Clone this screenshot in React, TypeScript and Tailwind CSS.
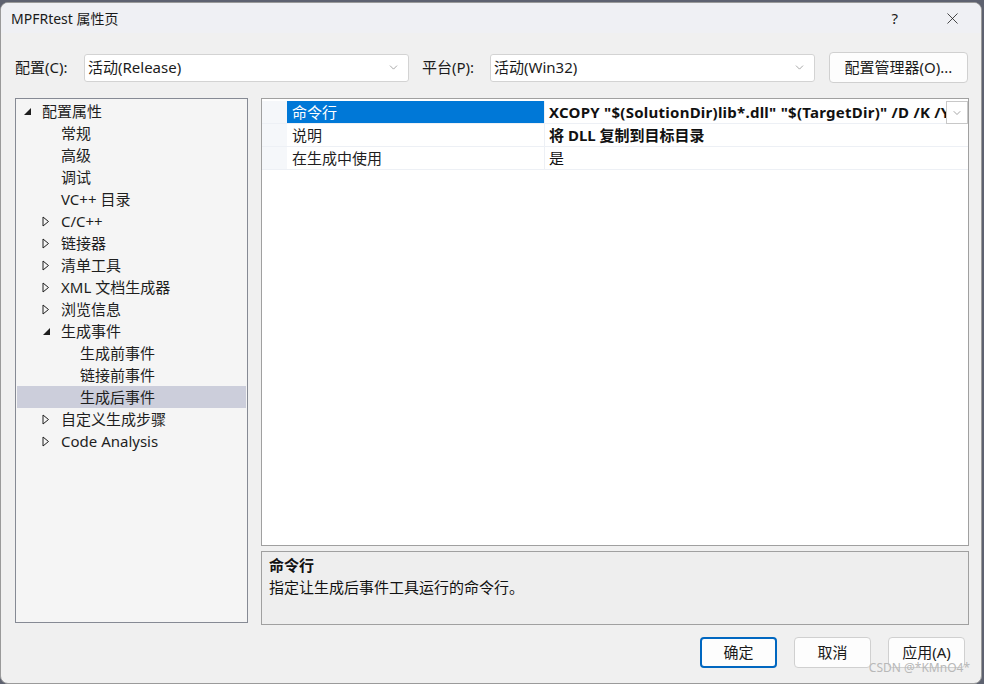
import { ChevronDown, X } from "lucide-react";

const font = { fontFamily: '"Noto Sans", "Noto Sans CJK SC", sans-serif' };

type TreeItem = { label: string; level: number; arrow?: "open" | "closed"; selected?: boolean };

const tree: TreeItem[] = [
	{ label: "配置属性", level: 0, arrow: "open" },
	{ label: "常规", level: 1 },
	{ label: "高级", level: 1 },
	{ label: "调试", level: 1 },
	{ label: "VC++ 目录", level: 1 },
	{ label: "C/C++", level: 1, arrow: "closed" },
	{ label: "链接器", level: 1, arrow: "closed" },
	{ label: "清单工具", level: 1, arrow: "closed" },
	{ label: "XML 文档生成器", level: 1, arrow: "closed" },
	{ label: "浏览信息", level: 1, arrow: "closed" },
	{ label: "生成事件", level: 1, arrow: "open" },
	{ label: "生成前事件", level: 2 },
	{ label: "链接前事件", level: 2 },
	{ label: "生成后事件", level: 2, selected: true },
	{ label: "自定义生成步骤", level: 1, arrow: "closed" },
	{ label: "Code Analysis", level: 1, arrow: "closed" },
];

const Arrow = ({ kind }: { kind?: "open" | "closed" }) => {
	if (!kind) return <span className="w-[19px] shrink-0" />;
	return (
		<span className="w-[19px] shrink-0 flex items-center">
			{kind === "open" ? (
				<svg width="9" height="9" viewBox="0 0 9 9">
					<path d="M8 1 L8 8 L1 8 Z" fill="#1e1e1e" />
				</svg>
			) : (
				<svg width="8" height="11" viewBox="0 0 8 11">
					<path d="M1 1 L6.5 5.5 L1 10 Z" fill="none" stroke="#1e1e1e" strokeWidth="1" />
				</svg>
			)}
		</span>
	);
};

const Combo = ({ value, className }: { value: string; className: string }) => (
	<div className={`h-[28px] bg-white border border-[#d3d3d3] rounded-[3px] flex items-center justify-between pl-[3px] pr-[8px] text-[15px] text-[#1b1b1b] ${className}`}>
		<span>{value}</span>
		<ChevronDown className="size-[13px] text-[#7a7a7a]" strokeWidth={1.2} />
	</div>
);

const Btn = ({ label, primary }: { label: string; primary?: boolean }) => (
	<button
		className={`w-[77px] h-[31px] rounded-[4px] bg-[#fdfdfd] text-[15px] text-[#1b1b1b] flex items-center justify-center ${
			primary ? "border-2 border-[#0067c0]" : "border border-[#d0d0d0]"
		}`}
	>
		{label}
	</button>
);

export default function App() {
	return (
		<div className="w-[984px] h-[684px] bg-[#5e6270] pt-[2px] overflow-hidden" style={font}>
			<div className="w-[982px] h-[682px] bg-[#f0f0f0] rounded-[8px] border border-[#9a9a9a] flex flex-col overflow-hidden">
				{/* title bar */}
				<div className="h-[30px] bg-[#eff0f4] flex items-center pl-[10px] shrink-0">
					<span className="text-[14px] text-[#1a1a1a]">MPFRtest 属性页</span>
					<span className="ml-auto mr-[45px] text-[15px] text-[#1a1a1a]">?</span>
					<X className="size-[19px] mr-[19px] text-[#1a1a1a]" strokeWidth={1} />
				</div>

				{/* config row */}
				<div className="h-[31px] mt-[19px] flex items-center pl-[14px] shrink-0">
					<span className="text-[15px] text-[#1b1b1b] w-[69px]">配置(C):</span>
					<Combo value="活动(Release)" className="w-[325px]" />
					<span className="text-[15px] text-[#1b1b1b] ml-[13px] w-[68px]">平台(P):</span>
					<Combo value="活动(Win32)" className="w-[325px]" />
					<button className="ml-[14px] w-[139px] h-[31px] rounded-[4px] bg-[#fdfdfd] border border-[#d0d0d0] text-[15px] text-[#1b1b1b]">
						配置管理器(O)...
					</button>
				</div>

				{/* main */}
				<div className="flex pl-[14px] pt-[15px] gap-[13px]">
					{/* tree */}
					<div className="w-[233px] h-[525px] border border-[#868a94] bg-[#f5f5f5] pt-[1px] pl-[1px] pr-[1px]">
						{tree.map((t) => (
							<div
								key={t.label}
								className={`h-[22px] flex items-center text-[15px] text-[#1e1e1e] ${t.selected ? "bg-[#cccedb]" : ""}`}
								style={{ paddingLeft: 6 + t.level * 19 }}
							>
								{t.level === 2 ? <span className="w-[19px] shrink-0" /> : <Arrow kind={t.arrow} />}
								<span className="whitespace-nowrap">{t.label}</span>
							</div>
						))}
					</div>

					{/* right side */}
					<div className="w-[708px] flex flex-col">
						<div className="h-[448px] border border-[#a0a0a0] bg-white pt-[2px] flex flex-col">
							<div className="flex h-[23px] border-b border-[#edf0f5]">
								<div className="w-[25px] bg-[#f5f7fa]" />
								<div className="w-[257px] bg-[#0078d7] text-white text-[15px] pl-[5px] flex items-center">命令行</div>
								<div className="flex-1 min-w-0 pl-[4px] flex items-center text-[15px] font-bold tracking-[0.25px] text-[#111] overflow-hidden whitespace-nowrap border-l border-[#edf0f5]">
									XCOPY "$(SolutionDir)lib*.dll" "$(TargetDir)" /D /K /Y
								</div>
								<div className="w-[22px] h-[23px] border border-[#c8c8c8] bg-white flex items-center justify-center">
									<ChevronDown className="size-[12px] text-[#6a6a6a]" strokeWidth={1.2} />
								</div>
							</div>
							<div className="flex h-[23px] border-b border-[#edf0f5]">
								<div className="w-[25px] bg-[#f5f7fa]" />
								<div className="w-[257px] text-[15px] text-[#1e1e1e] pl-[5px] flex items-center">说明</div>
								<div className="flex-1 pl-[4px] flex items-center text-[15px] font-bold text-[#111] border-l border-[#edf0f5]">将 DLL 复制到目标目录</div>
							</div>
							<div className="flex h-[23px] border-b border-[#edf0f5]">
								<div className="w-[25px] bg-[#f5f7fa]" />
								<div className="w-[257px] text-[15px] text-[#1e1e1e] pl-[5px] flex items-center">在生成中使用</div>
								<div className="flex-1 pl-[4px] flex items-center text-[15px] text-[#111] border-l border-[#edf0f5]">是</div>
							</div>
						</div>
						<div className="mt-[5px] h-[74px] border border-[#a0a0a0] bg-[#eeeeee] px-[7px] pt-[3px]">
							<div className="text-[15px] font-bold text-[#111] leading-[20px]">命令行</div>
							<div className="text-[15px] text-[#111] leading-[20px] mt-[2px]">指定让生成后事件工具运行的命令行。</div>
						</div>
					</div>
				</div>

				{/* buttons */}
				<div className="flex justify-end gap-[17px] pr-[16px] mt-[12px]">
					<Btn label="确定" primary />
					<Btn label="取消" />
					<Btn label="应用(A)" />
				</div>
				<div className="flex justify-end pr-[11px] -mt-[7px]">
					<span className="text-[12px] text-[#b8b8b8] leading-[14px]">CSDN @*KMnO4*</span>
				</div>
			</div>
		</div>
	);
}
